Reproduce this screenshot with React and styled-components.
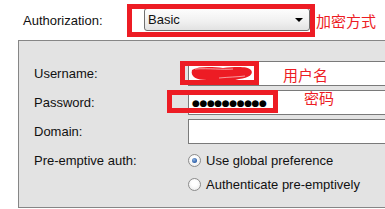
import React from 'react'
import styled, { createGlobalStyle } from 'styled-components'

const GlobalStyle = createGlobalStyle`
  html, body {
    margin: 0;
    padding: 0;
    background: #ffffff;
  }
  body {
    font-family: "Liberation Sans", Arial, sans-serif;
    font-size: 13px;
    color: #111;
  }
`

const RED = '#ed1c24'

const Page = styled.div`
  width: 385px;
  height: 209px;
  overflow: hidden;
  position: relative;
  background: #fff;
`

const AuthRow = styled.div`
  display: flex;
  align-items: center;
  height: 40px;
  padding-left: 23px;
`

const Label = styled.div`
  width: ${(p) => p.width || 'auto'};
  flex-shrink: 0;
  white-space: nowrap;
`

const SelectWrap = styled.div`
  position: relative;
  margin-top: -1px;
`

const Select = styled.div`
  box-sizing: border-box;
  width: 166px;
  height: 23px;
  border: 1px solid #707070;
  border-radius: 3px;
  background: linear-gradient(#fdfdfd, #f0f0f0 60%, #e2e2e2);
  display: flex;
  align-items: center;
  justify-content: space-between;
  padding: 0 6px 0 3px;
`

const Arrow = styled.span`
  width: 0;
  height: 0;
  border-left: 4px solid transparent;
  border-right: 4px solid transparent;
  border-top: 4px solid #000;
`

const Highlight = styled.div`
  position: absolute;
  box-sizing: border-box;
  border: 5px solid ${RED};
  left: ${(p) => p.left}px;
  top: ${(p) => p.top}px;
  width: ${(p) => p.w}px;
  height: ${(p) => p.h}px;
  pointer-events: none;
`

const Note = styled.span`
  font-family: "Noto Sans CJK SC", sans-serif;
  font-size: 15px;
  color: ${RED};
  white-space: nowrap;
  line-height: 1;
`

const FloatNote = styled(Note)`
  position: absolute;
  left: ${(p) => p.left}px;
  top: ${(p) => p.top}px;
`

const Panel = styled.div`
  margin-left: 18px;
  margin-right: -20px;
  border: 1px solid #868686;
  background: #e3e3e3;
  padding: 20px 0 11px 15px;
  display: flex;
  flex-direction: column;
  gap: 4px;
`

const Row = styled.div`
  display: grid;
  grid-template-columns: 154px 1fr;
  align-items: center;
  height: ${(p) => p.h}px;
`

const Field = styled.div`
  position: relative;
  box-sizing: border-box;
  height: 25px;
  background: #fff;
  border: 1px solid #7a7a7a;
  border-right: none;
  display: flex;
  align-items: center;
  padding-left: 3px;
`

const Dots = styled.span`
  font-family: "DejaVu Sans", sans-serif;
  font-size: 9px;
  letter-spacing: -0.4px;
  color: #000;
  margin-top: 1px;
`

const RadioLine = styled.label`
  display: flex;
  align-items: center;
  gap: 5px;
  white-space: nowrap;
`

const RadioCircle = styled.span`
  box-sizing: border-box;
  width: 13px;
  height: 13px;
  border-radius: 50%;
  border: 1px solid #8c8c8c;
  background: radial-gradient(circle at 50% 40%, #ffffff 30%, #e6e6e6 100%);
  display: flex;
  align-items: center;
  justify-content: center;

  &::after {
    content: '';
    display: ${(p) => (p.checked ? 'block' : 'none')};
    width: 5px;
    height: 5px;
    border-radius: 50%;
    background: radial-gradient(circle at 40% 35%, #8fb3e0, #2c5ea8 70%);
  }
`

const Scribble = () => (
  <svg
    width="66"
    height="18"
    viewBox="0 0 66 18"
    style={{ position: 'absolute', left: 0, top: 3 }}
  >
    <path
      d="M3 5 C10 1 24 2 34 3 C46 2 58 1 62 5 C65 9 60 13 50 14 C40 17 30 16 18 15 C8 15 1 12 3 5 Z"
      fill={RED}
    />
    <path d="M6 4 C20 3 34 5 44 4" stroke="#ffffff" strokeWidth="0.8" fill="none" opacity="0.7" />
    <path d="M30 13 C40 12 48 12 56 11" stroke="#ffffff" strokeWidth="0.8" fill="none" opacity="0.7" />
  </svg>
)

export default function App() {
  return (
    <Page>
      <GlobalStyle />
      <AuthRow>
        <Label width="121px">Authorization:</Label>
        <SelectWrap>
          <Select>
            <span>Basic</span>
            <Arrow />
          </Select>
          <Highlight left={-17} top={-4} w={188} h={33} />
        </SelectWrap>
        <Note style={{ marginLeft: 6 }}>加密方式</Note>
      </AuthRow>

      <Panel>
        <Row h={25}>
          <Label>Username:</Label>
          <Field>
            <Scribble />
            <Highlight left={-9} top={-1} w={79} h={24} />
            <FloatNote left={94} top={5}>用户名</FloatNote>
          </Field>
        </Row>
        <Row h={25}>
          <Label>Password:</Label>
          <Field>
            <Dots>●●●●●●●●●●</Dots>
            <Highlight left={-22} top={-1} w={111} h={23} />
            <FloatNote left={115} top={-1}>密码</FloatNote>
          </Field>
        </Row>
        <Row h={25}>
          <Label>Domain:</Label>
          <Field />
        </Row>
        <Row h={24}>
          <Label>Pre-emptive auth:</Label>
          <RadioLine>
            <RadioCircle checked />
            Use global preference
          </RadioLine>
        </Row>
        <Row h={24} style={{ marginTop: -4 }}>
          <span />
          <RadioLine>
            <RadioCircle />
            Authenticate pre-emptively
          </RadioLine>
        </Row>
      </Panel>
    </Page>
  )
}
